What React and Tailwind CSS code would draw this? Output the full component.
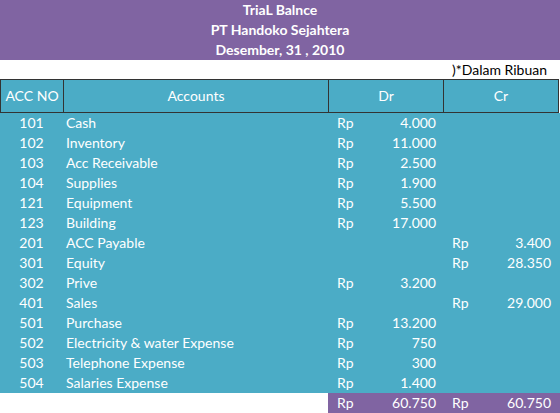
import React from "react";

const rows = [
  ["101", "Cash", "4.000", ""],
  ["102", "Inventory", "11.000", ""],
  ["103", "Acc Receivable", "2.500", ""],
  ["104", "Supplies", "1.900", ""],
  ["121", "Equipment", "5.500", ""],
  ["123", "Building", "17.000", ""],
  ["201", "ACC Payable", "", "3.400"],
  ["301", "Equity", "", "28.350"],
  ["302", "Prive", "3.200", ""],
  ["401", "Sales", "", "29.000"],
  ["501", "Purchase", "13.200", ""],
  ["502", "Electricity & water Expense", "750", ""],
  ["503", "Telephone Expense", "300", ""],
  ["504", "Salaries Expense", "1.400", ""],
];

function Money({ v, w }) {
  return (
    <div className={`${w} flex justify-between pl-[9px] pr-[7px]`}>
      {v ? (
        <>
          <span>Rp</span>
          <span>{v}</span>
        </>
      ) : null}
    </div>
  );
}

export default function App() {
  return (
    <div
      className="w-[560px] h-[413px] bg-white text-white text-[14px] leading-[20px] overflow-hidden"
      style={{ fontFamily: "Lato, 'Open Sans', sans-serif" }}
    >
      <div className="bg-[#8064a2] h-[60px] flex flex-col items-center font-bold">
        <div className="h-[20px]">TriaL Balnce</div>
        <div className="h-[20px]">PT Handoko Sejahtera</div>
        <div className="h-[20px]">Desember, 31 , 2010</div>
      </div>
      <div className="h-[19px] flex justify-end items-center pr-[13px] text-black">
        )*Dalam Ribuan
      </div>
      <div className="flex w-[559px] h-[34px] bg-[#4bacc6] border-y border-[#333333]">
        <div className="w-[63px] border-l border-[#333333] flex items-center justify-center">ACC NO</div>
        <div className="w-[265px] border-l border-[#333333] flex items-center justify-center">Accounts</div>
        <div className="w-[115px] border-l border-[#333333] flex items-center justify-center">Dr</div>
        <div className="w-[116px] border-x border-[#333333] flex items-center justify-center">Cr</div>
      </div>
      <div className="bg-[#4bacc6] w-[560px]">
        {rows.map((r) => (
          <div key={r[0]} className="flex h-[20px]">
            <div className="w-[63px] text-center">{r[0]}</div>
            <div className="w-[265px] pl-[3px]">{r[1]}</div>
            <Money v={r[2]} w="w-[115px]" />
            <Money v={r[3]} w="w-[115px]" />
          </div>
        ))}
      </div>
      <div className="flex h-[21px]">
        <div className="w-[328px]" />
        <div className="flex-1 flex bg-[#8064a2]">
          <Money v="60.750" w="w-[115px]" />
          <Money v="60.750" w="w-[115px]" />
        </div>
      </div>
    </div>
  );
}
